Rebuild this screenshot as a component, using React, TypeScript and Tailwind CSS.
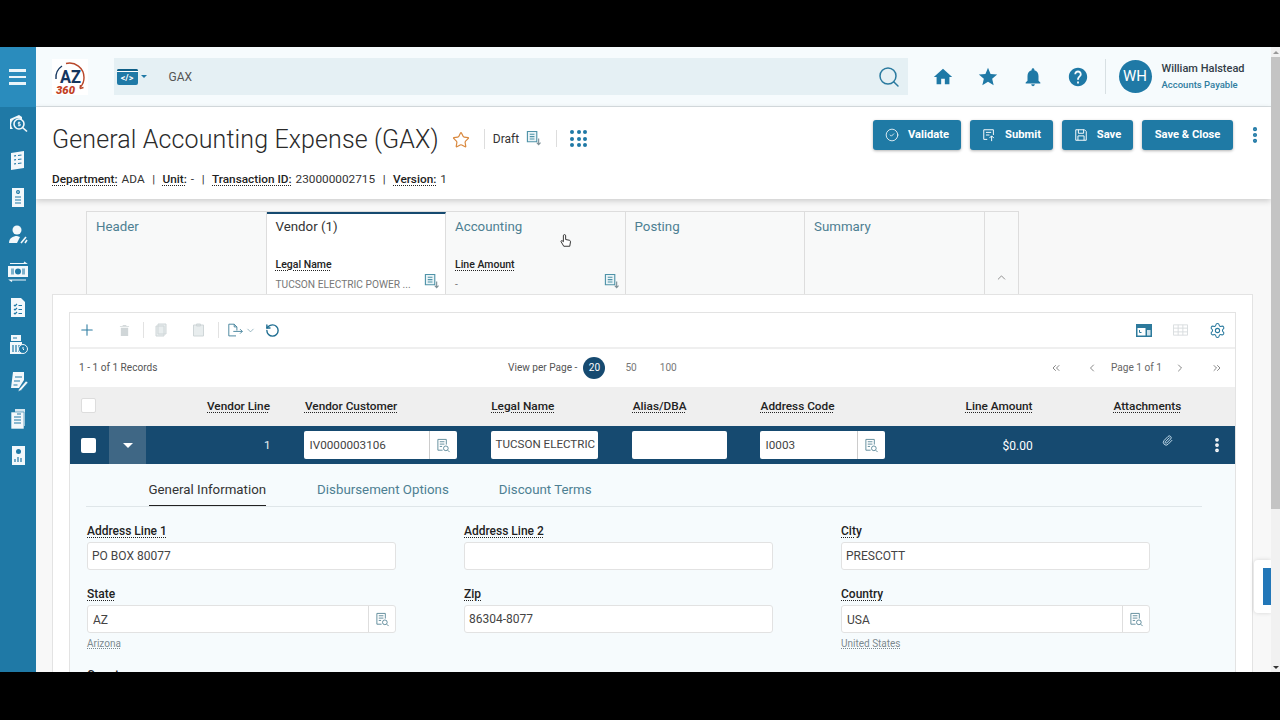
import React from "react";
import { ChevronDown, ChevronLeft, ChevronRight, ChevronUp, ChevronsLeft, ChevronsRight, CircleCheck, Plus, RotateCcw, Search, Settings, Paperclip, Star, MoreVertical } from "lucide-react";
import { MdHome, MdStar, MdNotifications, MdHelp } from "react-icons/md";

const font = "font-['Roboto',sans-serif]";

function DocArrow({ className = "" }: { className?: string }) {
  return (
    <svg viewBox="0 0 16 18" className={className} fill="none" stroke="#4f93a8" strokeWidth="1.2">
      <path d="M1.5 1.5h10v11h-10z" fill="#eaf4f7" />
      <path d="M4 4.5h5M4 7h5M4 9.5h5" />
      <path d="M13.5 9v6M11.5 13.5l2 2 2-2" stroke="#7b8f97" />
    </svg>
  );
}

function Lookup({ className = "" }: { className?: string }) {
  return (
    <svg viewBox="0 0 16 16" className={className} fill="none" stroke="#5f8b9b" strokeWidth="1">
      <path d="M7 13H2V1.5h9V7" />
      <path d="M4 4h5M4 6.5h5M4 9h2.5" />
      <circle cx="10.5" cy="11" r="2.5" />
      <path d="M12.5 13l2 2" />
    </svg>
  );
}

function SideIcon({ i }: { i: number }) {
  const p = { fill: "#f2f8fb", stroke: "none" };
  const line = { stroke: "#1f79a6", strokeWidth: 1.2, fill: "none" };
  const shapes: React.ReactNode[] = [
    <g key="0"><path d="M3 7l9-4 3 2v3a6 6 0 0 0-9 9H3z" {...p} /><circle cx="12" cy="12" r="5" stroke="#f2f8fb" strokeWidth="1.6" fill="none" /><path d="M15.5 15.5l4.5 4" stroke="#f2f8fb" strokeWidth="1.6" /><path d="M12 9.5v5M13.3 10.5h-2v1.5h2v1.5h-2" stroke="#f2f8fb" strokeWidth=".8" fill="none" /></g>,
    <g key="1"><path d="M4 4l13-2v17L4 21z" {...p} /><path d="M7 7l2-.3M11 6.5l3.5-.5M7 11l2-.3M11 10.5l3.5-.5M7 15l2-.3M11 14.5l3.5-.5" {...line} /></g>,
    <g key="2"><path d="M5 2h12v19H5z" {...p} /><circle cx="11" cy="6" r="1.4" {...line} /><path d="M8 11h6M8 14h6M8 17h6" {...line} /></g>,
    <g key="3"><circle cx="10" cy="7" r="4.5" {...p} /><path d="M2 20c0-5 4-7 8-7l3 1-3 6z" {...p} /><path d="M14 20l5-6M18 20l2-3" stroke="#f2f8fb" strokeWidth="1.6" /></g>,
    <g key="4"><path d="M1 6h20v11H1z" {...p} /><circle cx="11" cy="11.5" r="3" fill="#1f79a6" /><path d="M4 8.5h3v6H4zM15 8.5h3v6h-3z" fill="#1f79a6" opacity=".55" /><path d="M3 3.5h16l-2-1.500M19 20H3l2 1.500" stroke="#f2f8fb" strokeWidth="1.2" fill="none" /></g>,
    <g key="5"><path d="M4 2h10l4 4v15H4z" {...p} /><path d="M7 9l1 1 2-2M7 13l1 1 2-2M7 17l1 1 2-2M11.500 9.500H15M11.500 13.500H15M11.500 17.500H15" {...line} /></g>,
    <g key="6"><path d="M4 2h10v6H4z" {...p} /><path d="M3 9h12v12H3z" {...p} /><path d="M6 12v7M9 12v7M12 12v7M6 5h4" {...line} /><circle cx="16" cy="16" r="4.500" fill="#1f79a6" stroke="#f2f8fb" /><path d="M16 14v2l1 1" stroke="#f2f8fb" fill="none" /></g>,
    <g key="7"><path d="M6 2h11v8l-5 8H4z" {...p} /><path d="M8 7h7M7 11h6M6.500 15h4" {...line} /><path d="M12 19l7-8 2 1.500-7 8-3 1z" fill="#f2f8fb" stroke="#1f79a6" strokeWidth=".6" /></g>,
    <g key="8"><path d="M8 2h10v17H8z" {...p} opacity=".85" /><path d="M4 5h13v17H4z" {...p} stroke="#1f79a6" strokeWidth=".6" /><path d="M7 10h7M7 13h7M7 16h7M10 7h4" {...line} /></g>,
    <g key="9"><path d="M5 2h13v19H5z" {...p} /><path d="M8 18v-3M11 18v-5M14 18v-4" {...line} /><circle cx="11.500" cy="7.500" r="2.500" fill="#1f79a6" /></g>,
  ];
  return <svg viewBox="0 0 22 24" className="w-[22px] h-[24px]">{shapes[i]}</svg>;
}

function Lbl({ children, className = "" }: { children: React.ReactNode; className?: string }) {
  return <span className={`font-medium text-[#222] underline decoration-dotted decoration-1 underline-offset-2 ${className}`}>{children}</span>;
}

function ActionButton({ icon, label, w }: { icon?: React.ReactNode; label: string; w: string }) {
  return (
    <button className={`${w} h-[30px] pt-[1px] rounded-[3px] bg-[#1f7aa5] text-white text-[11.2px] font-bold flex items-center justify-center gap-[9px] shadow-[0_1px_3px_rgba(0,0,0,.3)]`}>
      {icon}
      {label}
    </button>
  );
}

function Tab({ title, active, label, value }: { title: string; active?: boolean; label?: string; value?: string }) {
  return (
    <div className={`w-[179.5px] h-full border-r border-[#ddd] px-[9px] flex flex-col ${active ? "bg-white border-t-2 border-t-[#164a70] pt-[4px]" : "bg-[#f8f9f9] pt-[6px]"}`}>
      <div className={`text-[13.3px] leading-[18px] ${active ? "text-[#333]" : "text-[#4d7f92]"}`}>{title}</div>
      {label && (
        <div className="mt-[22px] flex flex-col">
          <Lbl className="text-[10.5px] leading-[14px]">{label}</Lbl>
          <div className="flex justify-between items-start -mr-[3px]">
            <span className="mt-[6px] text-[10.2px] leading-[14px] text-[#777]">{value}</span>
            <DocArrow className="w-[15px] h-[17px] mt-[1px]" />
          </div>
        </div>
      )}
    </div>
  );
}

function Field({ label, value, lookup, sub }: { label: string; value?: string; lookup?: boolean; sub?: string }) {
  return (
    <div className="w-[309px] h-[63px] flex flex-col relative">
      <Lbl className="text-[12px] leading-[14px] self-start">{label}</Lbl>
      <div className="mt-[4px] h-[28px] bg-white border border-[#e2e2e2] rounded-[3px] flex items-center shrink-0">
        <span className={`flex-1 text-[12px] text-[#444] ${lookup ? "px-[5px] pt-[1px]" : "px-[4px]"}`}>{value}</span>
        {lookup && (
          <span className="w-[27px] h-full border-l border-[#dedede] flex items-center justify-center">
            <Lookup className="w-[15px] h-[15px]" />
          </span>
        )}
      </div>
      {sub && <span className="mt-[5px] text-[10px] leading-[12px] text-[#7d8a90] underline decoration-dotted self-start">{sub}</span>}
    </div>
  );
}

export default function App() {
  return (
    <div className={`${font} w-[1280px] h-[720px] bg-black flex flex-col overflow-hidden relative`}>
      <div className="h-[47px] shrink-0" />
      <div className="h-[625px] shrink-0 flex overflow-hidden">
        {/* sidebar */}
        <aside className="w-[35.5px] shrink-0 bg-[#1f79a6] flex flex-col items-center">
          <div className="w-full h-[60px] bg-[#2a8cbd] flex flex-col items-center justify-center gap-[4px]">
            <span className="w-[17px] h-[2.5px] bg-[#eaf5fa]" />
            <span className="w-[17px] h-[2.5px] bg-[#eaf5fa]" />
            <span className="w-[17px] h-[2.5px] bg-[#eaf5fa]" />
          </div>
          <div className="flex flex-col gap-[12.9px] pt-[5px]">
            {[0, 1, 2, 3, 4, 5, 6, 7, 8, 9].map((i) => (
              <SideIcon key={i} i={i} />
            ))}
          </div>
        </aside>

        {/* main */}
        <main className="w-[1235.5px] shrink-0 bg-[#f8f8f8] flex flex-col overflow-hidden relative">
          <header className="h-[60px] shrink-0 bg-[#f6fbfd] border-b border-[#d9dfe2] flex items-center pl-[16.5px]">
            <svg viewBox="0 0 36 36" className="w-[36px] h-[36px] shrink-0">
              <rect width="36" height="36" fill="#fff" />
              <path d="M14 4.500a14.500 14.500 0 0 1 18 14 14 14 0 0 1-3.500 9.500" stroke="#b8472a" strokeWidth="1.400" fill="none" />
              <path d="M28 29.500l.5-3.500M28 29.500l3.500-1" stroke="#b8472a" strokeWidth="1.400" fill="none" />
              <path d="M4 20a14 14 0 0 1 6-13" stroke="#14365f" strokeWidth="1.400" fill="none" />
              <text x="8" y="24" textLength={21} lengthAdjust="spacingAndGlyphs" fontSize="18" fontWeight="700" fill="#14365f" fontFamily="Roboto">AZ</text>
              <text x="4" y="34.500" textLength={19} lengthAdjust="spacingAndGlyphs" fontSize="10" fontWeight="900" fontStyle="italic" fill="#c2401f" fontFamily="Roboto">360</text>
            </svg>
            <div className="ml-[25.5px] w-[794px] h-[37px] bg-[#e5f0f4] flex items-center">
              <span className="ml-[3px] w-[21px] h-[16px] rounded-[2px] bg-[#1f79a6] flex flex-col items-center text-white text-[9px] leading-[12px] font-bold overflow-hidden">
                <span className="w-full h-[3px] bg-[#0f5f87] border-b border-white" />
                {"</>"}
              </span>
              <span className="ml-[3px] w-0 h-0 border-x-[3px] border-x-transparent border-t-[3px] border-t-[#1f79a6]" />
              <span className="ml-[22px] text-[12px] text-[#555]">GAX</span>
              <Search className="ml-auto mr-[7px] w-[24px] h-[24px] text-[#2a7a9f]" strokeWidth={1.5} />
            </div>
            <div className="ml-[24px] flex items-center gap-[23px] text-[#1f79a6]">
              <MdHome className="w-[22px] h-[22px]" />
              <MdStar className="w-[22px] h-[22px]" />
              <MdNotifications className="w-[22px] h-[22px]" />
              <MdHelp className="w-[22px] h-[22px]" />
            </div>
            <div className="ml-[16px] w-px h-[35px] bg-[#d8e0e3]" />
            <div className="ml-[13px] w-[33px] h-[33px] rounded-full bg-[#1f79a6] text-white text-[15px] flex items-center justify-center">WH</div>
            <div className="ml-[10px] flex flex-col">
              <span className="text-[11px] leading-[16px] font-medium text-[#333e48]">William Halstead</span>
              <span className="text-[9.500px] leading-[15px] font-medium text-[#2f7d9f]">Accounts Payable</span>
            </div>
          </header>

          <section className="h-[92px] shrink-0 bg-white shadow-[0_2px_6px_rgba(0,0,0,.18)] z-10 pl-[16.5px] flex flex-col">
            <div className="h-[63px] flex items-center shrink-0">
              <h1 className="mt-[2px] text-[25px] font-light text-[#2a2a2a] tracking-[0.125px] whitespace-nowrap">General Accounting Expense (GAX)</h1>
              <Star className="ml-[13px] w-[18px] h-[18px] text-[#d9883d] mt-[3px]" strokeWidth={1.6} />
              <span className="ml-[14px] w-px h-[20px] bg-[#ddd]" />
              <span className="ml-[8px] text-[12px] text-[#333]">Draft</span>
              <DocArrow className="ml-[7px] w-[15px] h-[17px]" />
              <span className="ml-[15px] w-px h-[17px] bg-[#ddd]" />
              <span className="ml-[13px] grid grid-cols-3 gap-[2.500px]">
                {[0, 1, 2, 3, 4, 5, 6, 7, 8].map((i) => (
                  <span key={i} className="w-[4px] h-[4px] rounded-full bg-[#1f79a6]" />
                ))}
              </span>
              <div className="ml-auto -mt-[8px] flex items-center gap-[9px] mr-[12px]">
                <ActionButton w="w-[88px]" icon={<CircleCheck className="w-[14px] h-[14px]" strokeWidth={1.4} />} label="Validate" />
                <ActionButton w="w-[83px]" icon={<svg viewBox="0 0 16 16" className="w-[14px] h-[14px]" fill="none" stroke="#fff" strokeWidth="1.100"><path d="M6 13H2V2h11v6M4.500 5h6M4.500 8h4" /><path d="M11 15V9M8.500 11.500L11 9l2.500 2.500" /></svg>} label="Submit" />
                <ActionButton w="w-[71px]" icon={<svg viewBox="0 0 16 16" className="w-[14px] h-[14px]" fill="none" stroke="#fff" strokeWidth="1.100"><path d="M2 2h10l2 2v10H2zM5 2v4h6V2M4.500 14V9h7v5" /></svg>} label="Save" />
                <ActionButton w="w-[91px]" label="Save & Close" />
              </div>
              <MoreVertical className="-mt-[8px] mr-[6px] w-[20px] h-[20px] text-[#1f79a6]" strokeWidth={3} />
            </div>
            <div className="mt-[1px] text-[11.8px] leading-[16px] text-[#333] flex items-center gap-[4px] whitespace-nowrap">
              <Lbl>Department:</Lbl>
              <span>ADA</span>
              <span className="mx-[3.5px]">|</span>
              <Lbl>Unit:</Lbl>
              <span>-</span>
              <span className="mx-[3.5px]">|</span>
              <Lbl>Transaction ID:</Lbl>
              <span>230000002715</span>
              <span className="mx-[3.5px]">|</span>
              <Lbl>Version:</Lbl>
              <span>1</span>
            </div>
          </section>

          {/* tabs */}
          <div className="ml-[50.5px] mt-[12px] w-[933px] h-[83px] shrink-0 flex border border-[#ddd] border-b-0">
            <Tab title="Header" />
            <Tab title="Vendor (1)" active label="Legal Name" value="TUCSON ELECTRIC POWER ..." />
            <Tab title="Accounting" label="Line Amount" value="-" />
            <Tab title="Posting" />
            <Tab title="Summary" />
            <div className="flex-1 bg-[#f8f9f9] flex items-end justify-center pb-[10px]">
              <ChevronUp className="w-[13px] h-[13px] text-[#666]" strokeWidth={1.300} />
            </div>
          </div>

          {/* card */}
          <div className="ml-[16.5px] w-[1201px] flex-1 min-h-0 bg-white border border-[#e3e3e3] border-b-0 px-[16px] pt-[17px] overflow-hidden">
            <div className="w-[1167px] border border-[#e3e3e3] border-b-0 h-full overflow-hidden">
              <div className="h-[36px] border-b-2 border-[#efefef] flex items-center pl-[8px] pr-[9px]">
                <Plus className="w-[18px] h-[18px] text-[#2a7a9f]" strokeWidth={1.400} />
                <svg viewBox="0 0 12 14" className="ml-[23px] w-[11px] h-[13px]" fill="#d0d6d8"><path d="M1 2h10v1H1zM2 4h8v9H2z" /><path d="M4 1h4v1H4z" /></svg>
                <span className="ml-[13px] w-px h-[16px] bg-[#e2e2e2]" />
                <svg viewBox="0 0 12 14" className="ml-[11px] w-[12px] h-[14px]" fill="#e8edee" stroke="#cfd6d8"><path d="M3 1h8v10H3zM1 3h8v10H1z" /></svg>
                <svg viewBox="0 0 12 14" className="ml-[25px] w-[13px] h-[14px]" fill="#e8edee" stroke="#cfd6d8"><path d="M1 2h10v11H1zM4 1h4v2H4z" /></svg>
                <span className="ml-[13px] w-px h-[16px] bg-[#e2e2e2]" />
                <svg viewBox="0 0 20 16" className="ml-[8px] w-[18px] h-[15px]" fill="none" stroke="#3f7f99" strokeWidth="1"><path d="M10 14H2V1h6l3 3v4M8 1v3h3M7 9h10M14.500 6.500L17 9l-2.500 2.500" /></svg>
                <ChevronDown className="w-[11px] h-[11px] text-[#6c97a8]" strokeWidth={1.500} />
                <RotateCcw className="ml-[9px] w-[15px] h-[15px] text-[#1e6d91]" strokeWidth={2.2} />
                <div className="ml-auto flex items-center gap-[21px]">
                  <svg viewBox="0 0 16 13" className="w-[16px] h-[13px]"><rect width="16" height="13" fill="#2d7a9c" /><rect x="1.500" y="4" width="8" height="7.500" fill="#fff" /><rect x="11" y="6" width="3.500" height="5.500" fill="#cfe3ec" /><path d="M3.500 6v2.500h2" stroke="#2d7a9c" fill="none" /></svg>
                  <svg viewBox="0 0 16 12" className="w-[15px] h-[12px]" fill="none" stroke="#d8dcde"><path d="M.5.500h15v11H.5zM.5 4h15M.5 8h15M5.500.500v11M10.500.500v11" /></svg>
                  <Settings className="w-[17px] h-[17px] text-[#2a7a9f]" strokeWidth={1.500} />
                </div>
              </div>

              <div className="h-[38px] flex items-center pl-[9px] pr-[12px] text-[10.1px] text-[#555] relative">
                <span>1 - 1 of 1 Records</span>
                <div className="absolute left-[438px] flex items-center">
                  <span>View per Page -</span>
                  <span className="ml-[6px] w-[22px] h-[22px] rounded-full bg-[#164a70] text-white flex items-center justify-center">20</span>
                  <span className="ml-[20px] text-[#777]">50</span>
                  <span className="ml-[23px] text-[#777]">100</span>
                </div>
                <div className="ml-auto flex items-center text-[#666]">
                  <ChevronsLeft className="w-[12px] h-[12px] text-[#555]" strokeWidth={1.400} />
                  <ChevronLeft className="ml-[24px] w-[12px] h-[12px] text-[#555]" strokeWidth={1.400} />
                  <span className="ml-[13px]">Page 1 of 1</span>
                  <ChevronRight className="ml-[12px] w-[12px] h-[12px] text-[#555]" strokeWidth={1.400} />
                  <ChevronsRight className="ml-[25px] w-[12px] h-[12px] text-[#555]" strokeWidth={1.400} />
                </div>
              </div>

              <div className="h-[39px] bg-[#efefef] relative text-[11.8px] flex items-center pt-[1px]">
                <span className="ml-[11px] -mt-[4px] w-[15px] h-[15px] rounded-[2px] bg-white border border-[#ddd]" />
                <Lbl className="ml-[111px]">Vendor Line</Lbl>
                <Lbl className="ml-[35px]">Vendor Customer</Lbl>
                <Lbl className="ml-[94px]">Legal Name</Lbl>
                <Lbl className="ml-[78.5px]">Alias/DBA</Lbl>
                <Lbl className="ml-[74px]">Address Code</Lbl>
                <Lbl className="ml-[131px]">Line Amount</Lbl>
                <Lbl className="ml-[81px]">Attachments</Lbl>
              </div>

              <div className="h-[38px] bg-[#164a70] flex items-center text-[11.7px] text-[#e6f1f6]">
                <span className="ml-[11px] w-[15px] h-[15px] rounded-[2px] bg-white" />
                <span className="ml-[13px] w-[37px] h-full bg-[#3f6785] flex items-center justify-center">
                  <span className="w-0 h-0 border-x-[5px] border-x-transparent border-t-[5px] border-t-white" />
                </span>
                <span className="ml-[118px] pt-[1px]">1</span>
                <div className="ml-[33px] w-[153px] h-[28px] bg-white rounded-[2px] flex items-center">
                  <span className="flex-1 px-[6px] pt-[1px] text-[#444]">IV0000003106</span>
                  <span className="w-[28px] h-full border-l border-[#ccc] flex items-center justify-center"><Lookup className="w-[15px] h-[15px]" /></span>
                </div>
                <div className="ml-[34px] w-[107px] h-[28px] bg-white rounded-[2px] flex items-center px-[5px] text-[#444] text-[11.6px] overflow-hidden whitespace-nowrap">TUCSON ELECTRIC</div>
                <div className="ml-[34px] w-[95px] h-[28px] bg-white rounded-[2px]" />
                <div className="ml-[33px] w-[125px] h-[28px] bg-white rounded-[2px] flex items-center">
                  <span className="flex-1 px-[6px] pt-[1px] text-[#444]">I0003</span>
                  <span className="w-[28px] h-full border-l border-[#ccc] flex items-center justify-center"><Lookup className="w-[15px] h-[15px]" /></span>
                </div>
                <span className="ml-[118px] pt-[1px] text-[12px] text-white">$0.00</span>
                <Paperclip className="ml-[129px] -mt-[9px] w-[11px] h-[11px] text-[#cfe6f3]" strokeWidth={2} />
                <MoreVertical className="ml-[35px] w-[18px] h-[18px] text-white" strokeWidth={3} />
              </div>

              <div className="bg-[#f6fbfd] h-[300px] px-[16px]">
                <div className="h-[43px] w-[1116px] border-b border-[#dfe6e9] flex items-end text-[13.3px] text-[#4d7f92]">
                  <span className="ml-[62.5px] h-[31px] pt-[5px] border-b border-[#222] text-[#333]">General Information</span>
                  <span className="ml-[51px] h-[31px] pt-[5px]">Disbursement Options</span>
                  <span className="ml-[50px] h-[31px] pt-[5px]">Discount Terms</span>
                </div>
                <div className="ml-[1px] mt-[17px] grid grid-cols-[309px_309px_309px] gap-x-[68px]">
                  <Field label="Address Line 1" value="PO BOX 80077" />
                  <Field label="Address Line 2" />
                  <Field label="City" value="PRESCOTT" />
                  <Field label="State" value="AZ" lookup sub="Arizona" />
                  <Field label="Zip" value="86304-8077" />
                  <Field label="Country" value="USA" lookup sub="United States" />
                  <div className="mt-[17px] leading-[14px]"><Lbl className="text-[12px] leading-[14px]">County</Lbl></div>
                </div>
              </div>
            </div>
          </div>
          <div className="absolute left-[1218.5px] top-[513px] w-[17px] h-[53px] bg-white rounded-l-[4px] shadow-[0_0_4px_rgba(0,0,0,.15)] flex items-center justify-end">
            <span className="w-[8px] h-[37px] bg-[#2277b8]" />
          </div>
        </main>

        {/* scrollbar */}
        <div className="w-[9px] shrink-0 bg-[#f1f1f1] flex flex-col items-center">
          <span className="h-[10px] flex items-center justify-center"><span className="w-0 h-0 border-x-[3px] border-x-transparent border-b-[3px] border-b-[#999]" /></span>
          <span className="w-full h-[452px] bg-[#c4c4c4]" />
          <span className="mt-auto h-[10px] flex items-center justify-center"><span className="w-0 h-0 border-x-[3px] border-x-transparent border-t-[3px] border-t-[#333]" /></span>
        </div>
      </div>
      {/* cursor */}
      <svg viewBox="0 0 16 20" className="absolute left-[560px] top-[233px] w-[12px] h-[16px]" fill="#fff" stroke="#222" strokeWidth="1.200"><path d="M6 1.500c1 0 1.500.5 1.500 1.500v5l5 1c1 .3 1.500 1 1.500 2l-1 6H5L1.500 11c-.6-1 .6-2 1.500-1.300L4.500 11V3c0-1 .5-1.500 1.500-1.500z" /></svg>
    </div>
  );
}
